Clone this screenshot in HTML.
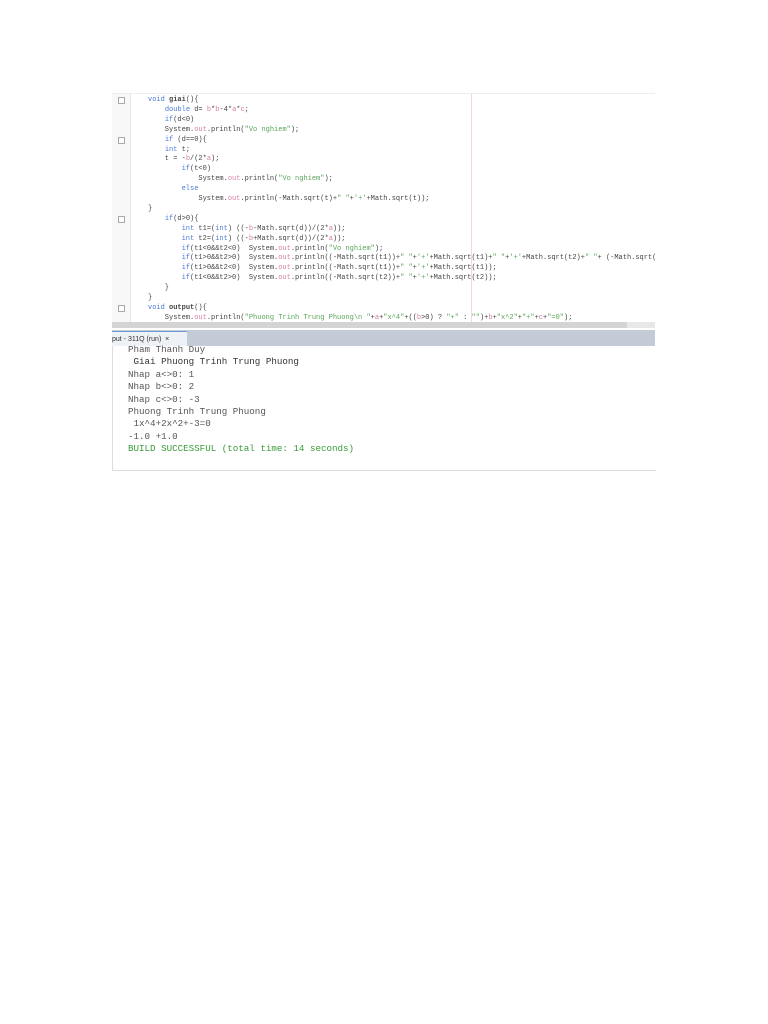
<!DOCTYPE html>
<html><head><meta charset="utf-8"><style>
body{margin:0;width:768px;height:1024px;background:#fff;position:relative;font-family:"Liberation Mono",monospace;}
#code{position:absolute;left:112px;top:93px;width:543px;height:230px;background:#fff;overflow:hidden;border-top:1px solid #eee;}
#gut{position:absolute;left:0;top:0;width:18px;height:100%;background:#f8f8f8;border-right:1px solid #e8e8e8;}
.l{position:absolute;left:0;white-space:pre;font-size:7px;line-height:9px;color:#444;}
.k{color:#4a7ad8}.s{color:#5aa55a}.o{color:#d880a8}.b{font-weight:bold}
.f{position:absolute;left:6px;width:5px;height:5px;border:1px solid #aaa;background:#fff;}
#margin{position:absolute;left:359px;top:0;width:1px;height:230px;background:#f2d8de;}
#sb{position:absolute;left:112px;top:322px;width:543px;height:6px;background:#e8e8e8;}
#sbt{position:absolute;left:112px;top:322px;width:515px;height:6px;background:#d4d4d4;}
#tabbar{position:absolute;left:112px;top:330px;width:543px;height:16px;background:#c3cbd6;}
#tab{position:absolute;left:112px;top:331px;width:75px;height:15px;background:#eef1f5;border-top:1px solid #6a9ad8;font-family:"Liberation Sans",sans-serif;font-size:7px;line-height:15px;color:#333;}
#out{position:absolute;left:112px;top:346px;width:543px;height:124px;background:#fff;border-left:1px solid #ddd;border-bottom:1px solid #ddd;}
.ol{position:absolute;left:15px;white-space:pre;font-size:9.2px;line-height:12px;color:#555;}
</style></head><body>
<div id="code"><div id="gut"></div>
<div class="f" style="top:3px"></div><div class="f" style="top:43px"></div><div class="f" style="top:122px"></div><div class="f" style="top:211px"></div>
<div id="margin"></div>
<div style="position:absolute;left:36px;top:2px">
<div class="l" style="top:0"><span class="k">void</span> <span class="b">giai</span>(){</div>
<div class="l" style="top:9.9px">    <span class="k">double</span> d= <span class="o">b</span>*<span class="o">b</span>-4*<span class="o">a</span>*<span class="o">c</span>;</div>
<div class="l" style="top:19.8px">    <span class="k">if</span>(d&lt;0)</div>
<div class="l" style="top:29.7px">    System.<span class="o">out</span>.println(<span class="s">"Vo nghiem"</span>);</div>
<div class="l" style="top:39.6px">    <span class="k">if</span> (d==0){</div>
<div class="l" style="top:49.5px">    <span class="k">int</span> t;</div>
<div class="l" style="top:59.4px">    t = -<span class="o">b</span>/(2*<span class="o">a</span>);</div>
<div class="l" style="top:69.3px">        <span class="k">if</span>(t&lt;0)</div>
<div class="l" style="top:79.2px">            System.<span class="o">out</span>.println(<span class="s">"Vo nghiem"</span>);</div>
<div class="l" style="top:89.1px">        <span class="k">else</span></div>
<div class="l" style="top:99px">            System.<span class="o">out</span>.println(-Math.sqrt(t)+<span class="s">" "</span>+<span class="s">'+'</span>+Math.sqrt(t));</div>
<div class="l" style="top:108.9px">}</div>
<div class="l" style="top:118.8px">    <span class="k">if</span>(d&gt;0){</div>
<div class="l" style="top:128.7px">        <span class="k">int</span> t1=(<span class="k">int</span>) ((-<span class="o">b</span>-Math.sqrt(d))/(2*<span class="o">a</span>));</div>
<div class="l" style="top:138.6px">        <span class="k">int</span> t2=(<span class="k">int</span>) ((-<span class="o">b</span>+Math.sqrt(d))/(2*<span class="o">a</span>));</div>
<div class="l" style="top:148.5px">        <span class="k">if</span>(t1&lt;0&amp;&amp;t2&lt;0)  System.<span class="o">out</span>.println(<span class="s">"Vo nghiem"</span>);</div>
<div class="l" style="top:158.4px">        <span class="k">if</span>(t1&gt;0&amp;&amp;t2&gt;0)  System.<span class="o">out</span>.println((-Math.sqrt(t1))+<span class="s">" "</span>+<span class="s">'+'</span>+Math.sqrt(t1)+<span class="s">" "</span>+<span class="s">'+'</span>+Math.sqrt(t2)+<span class="s">" "</span>+ (-Math.sqrt(t2)));</div>
<div class="l" style="top:168.3px">        <span class="k">if</span>(t1&gt;0&amp;&amp;t2&lt;0)  System.<span class="o">out</span>.println((-Math.sqrt(t1))+<span class="s">" "</span>+<span class="s">'+'</span>+Math.sqrt(t1));</div>
<div class="l" style="top:178.2px">        <span class="k">if</span>(t1&lt;0&amp;&amp;t2&gt;0)  System.<span class="o">out</span>.println((-Math.sqrt(t2))+<span class="s">" "</span>+<span class="s">'+'</span>+Math.sqrt(t2));</div>
<div class="l" style="top:188.1px">    }</div>
<div class="l" style="top:198px">}</div>
<div class="l" style="top:207.9px"><span class="k">void</span> <span class="b">output</span>(){</div>
<div class="l" style="top:217.8px">    System.<span class="o">out</span>.println(<span class="s">"Phuong Trinh Trung Phuong\n "</span>+<span class="o">a</span>+<span class="s">"x^4"</span>+((<span class="o">b</span>&gt;0) ? <span class="s">"+"</span> : <span class="s">""</span>)+<span class="o">b</span>+<span class="s">"x^2"</span>+<span class="s">"+"</span>+<span class="o">c</span>+<span class="s">"=0"</span>);</div>
</div>
</div>
<div id="sb"></div><div id="sbt"></div>
<div id="tabbar"></div>
<div id="tab">put - 311Q (run) &nbsp;×</div>
<div id="out">
<div class="ol" style="top:-2px">Pham Thanh Duy</div>
<div class="ol" style="top:10.4px;color:#333"> Giai Phuong Trinh Trung Phuong</div>
<div class="ol" style="top:22.8px">Nhap a&lt;&gt;0: 1</div>
<div class="ol" style="top:35.2px">Nhap b&lt;&gt;0: 2</div>
<div class="ol" style="top:47.6px">Nhap c&lt;&gt;0: -3</div>
<div class="ol" style="top:60px">Phuong Trinh Trung Phuong</div>
<div class="ol" style="top:72.4px"> 1x^4+2x^2+-3=0</div>
<div class="ol" style="top:84.8px">-1.0 +1.0</div>
<div class="ol" style="top:97.2px;color:#3a9a3a">BUILD SUCCESSFUL (total time: 14 seconds)</div>
</div>
</body></html>
